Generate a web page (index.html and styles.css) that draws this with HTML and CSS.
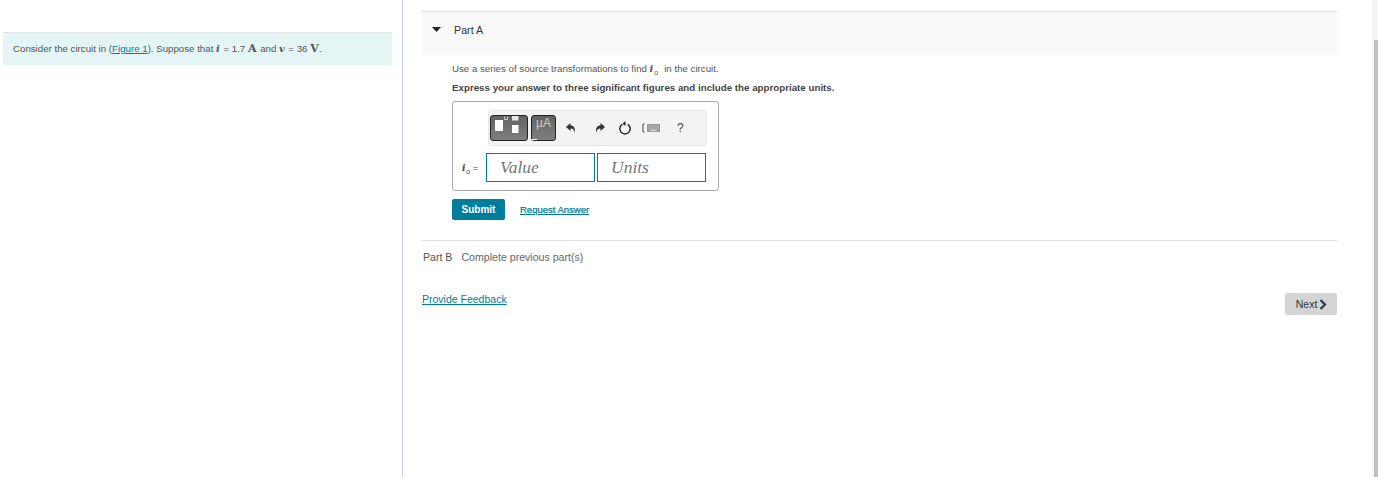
FILE: index.html
```html
<!DOCTYPE html>
<html lang="en">
<head>
<meta charset="utf-8">
<title>Part A</title>
<link rel="stylesheet" href="styles.css">
</head>
<body>
<div class="page">
  <aside class="left">
    <div class="intro">Consider the circuit in (<a href="#">Figure 1</a>). Suppose that <span class="mi">i</span> = 1.7 <span class="mu">A</span> and <span class="mi">v</span> = 36 <span class="mu">V</span>.</div>
  </aside>
  <main class="right">
    <header class="part-head">
      <svg class="caret" width="9" height="5" viewBox="0 0 9 5"><path d="M0 0h9L4.500 5z" fill="#222"/></svg>
      <span>Part A</span>
    </header>
    <section class="part-body">
      <p class="q">Use a series of source transformations to find <span class="mi">i</span><sub class="sub">o</sub><span class="after-sub">in the circuit.</span></p>
      <p class="inst">Express your answer to three significant figures and include the appropriate units.</p>
      <div class="answer">
        <div class="toolbar">
          <button class="tbtn tbtn-wide" type="button" aria-label="Templates">
            <svg width="36" height="24" viewBox="0 0 36 24"><rect x="4" y="4" width="8" height="11" fill="#fff"/><path d="M13.500 .5v3h3v-3" fill="none" stroke="#ddd" stroke-width=".9"/><rect x="21" y="0" width="6.500" height="4.500" fill="#e8e8e8"/><rect x="21" y="9" width="6.500" height="8" fill="#fff"/></svg>
          </button>
          <button class="tbtn tbtn-unit" type="button">µA</button>
          <svg class="tool tool-undo" width="12" height="12" viewBox="0 0 12 12"><path d="M5.500 1 1 5l4.500 4V6.500c2 0 3.500.8 4.200 4.500C10.500 6 9 3.500 5.500 3.500z" fill="#333"/></svg>
          <svg class="tool tool-redo" width="12" height="12" viewBox="0 0 12 12"><path d="M6.500 1 11 5 6.500 9V6.500c-2 0-3.500.8-4.200 4.500C1.500 6 3 3.500 6.500 3.500z" fill="#333"/></svg>
          <svg class="tool tool-reset" width="14" height="14" viewBox="0 0 14 14"><path d="M4.300 3.300a5.200 5.200 0 1 0 5.400 0" fill="none" stroke="#222" stroke-width="1.500"/><path d="M7.500 0v5L4.500 2.800z" fill="#222"/></svg>
          <svg class="tool tool-kbd" width="19" height="10" viewBox="0 0 19 10"><path d="M2.500 1H1v8h1.500" fill="none" stroke="#444"/><rect x="5" y="1" width="13" height="8" fill="#999"/><path d="M6 3h11M6 5h11" stroke="#ddd" stroke-width=".7" stroke-dasharray="1 .7"/><path d="M8 7.200h7" stroke="#eee"/></svg>
          <span class="help">?</span>
        </div>
        <div class="inputs">
          <label class="lhs"><span class="mi">i</span><sub class="sub">o</sub> =</label>
          <div class="field">Value</div>
          <div class="field">Units</div>
        </div>
      </div>
      <div class="actions">
        <button class="submit" type="button">Submit</button>
        <a class="req" href="#">Request Answer</a>
      </div>
    </section>
    <div class="part-b"><b>Part B</b><span>Complete previous part(s)</span></div>
    <div class="foot">
      <a class="feedback" href="#">Provide Feedback</a>
      <button class="next" type="button">Next<svg width="8" height="11" viewBox="0 0 8 11"><path d="M1.500 1 6 5.500 1.500 10" fill="none" stroke="#2d3a55" stroke-width="2.200"/></svg></button>
    </div>
  </main>
</div>
<div class="scrollbar"><div class="thumb"></div></div>
</body>
</html>
```

FILE: styles.css
```css
* { box-sizing: border-box; }
html, body { margin: 0; height: 100%; background: #fff; overflow: hidden; }
body { font-family: "Liberation Sans", Arial, sans-serif; color: #333; }
a { color: #007c9c; }
p { margin: 0; }
.page { display: flex; height: 477px; }
.left { width: 403px; flex: none; border-right: 1px solid #b9cfdc; padding: 32px 10px 0 3px; }
.intro { height: 33px; background: #e5f5f6; border-top: 1px solid #dde5e6; padding-left: 10px; font-size: 9.700px; line-height: 31px; color: #555; white-space: nowrap; }
.mi { font-family: "DejaVu Serif", serif; font-style: italic; font-weight: bold; margin-right: 1px; }
.mu { font-family: "DejaVu Serif", serif; font-weight: bold; font-size: 11px; margin: 0 1px 0 0; }
.sub { font-size: 7px; line-height: 0; }
.after-sub { margin-left: 6px; }
.right { width: 934px; flex: none; padding: 11px 0 0 19px; }
.part-head { height: 44px; background: #f9f9f9; border-top: 1px solid #e0e0e0; display: flex; align-items: center; gap: 13px; padding: 0 0 8px 10px; font-size: 10.700px; color: #333; }
.part-body { padding: 9px 0 0 30px; height: 186px; border-bottom: 1px solid #e0e0e0; }
.q { font-size: 9.700px; line-height: 10px; color: #555; }
.inst { font-size: 9.750px; font-weight: bold; line-height: 12px; margin-top: 8px; color: #444; }
.answer { width: 267px; height: 90px; margin-top: 7px; border: 1px solid #aaa; border-radius: 3px; padding: 8px 12px 0 0; }
.toolbar { margin-left: 35px; width: 219px; height: 36px; background: #f3f3f3; border: 1px solid #e6e6e6; border-radius: 4px; display: flex; align-items: center; padding: 0 0 0 1px; }
.tbtn { height: 26px; padding: 0; margin: 0; border: 1px solid #222; border-radius: 3px; background: linear-gradient(#636363, #7f7f7f); color: #ccc; display: flex; align-items: center; justify-content: center; }
.tbtn-wide { width: 38px; margin-right: 3px; }
.tbtn-unit { position: relative; width: 25px; font-family: "Liberation Sans", Arial, sans-serif; font-size: 12px; line-height: 13px; align-items: flex-start; padding-top: 1px; }
.tbtn-unit::after { content: ""; position: absolute; left: 0; bottom: 0; width: 5px; height: 1px; background: #fff; }
.tool { flex: none; }
.tool-undo { margin-left: 9px; }
.tool-redo { margin-left: 17px; }
.tool-reset { margin-left: 12px; }
.tool-kbd { margin-left: 10px; }
.help { margin-left: 16px; font-size: 12px; color: #444; }
.inputs { display: flex; align-items: center; gap: 2px; margin-top: 7px; height: 29px; }
.lhs { width: 31px; flex: none; text-align: right; padding-right: 6px; font-size: 9px; color: #444; white-space: nowrap; }
.field { width: 109px; height: 29px; border: 1px solid #007c9c; padding-left: 13px; font-family: "Liberation Serif", serif; font-style: italic; font-size: 17.500px; line-height: 26px; color: #777; }
.actions { display: flex; align-items: center; gap: 15px; margin-top: 8px; }
.submit { width: 53px; height: 21px; padding: 0 0 1px; border: 0; border-radius: 2px; background: #007c9c; color: #fff; font: bold 10px "Liberation Sans", Arial, sans-serif; }
.req { font-size: 9.500px; color: #007c9c; -webkit-text-stroke: .25px #007c9c; margin-top: -1px; }
.part-b { display: flex; gap: 9px; padding: 10px 0 0 1px; font-size: 10.600px; line-height: 12px; color: #666; }
.part-b b { font-weight: normal; color: #555; }
.foot { display: flex; justify-content: space-between; align-items: flex-start; margin-top: 30px; }
.feedback { font-size: 10.500px; line-height: 12px; color: #007c9c; }
.next { width: 52px; height: 22px; padding: 0 0 0 1px; border: 0; border-radius: 2px; background: #d4d4d4; color: #333; font: 10.500px "Liberation Sans", Arial, sans-serif; display: flex; align-items: center; justify-content: center; gap: 2px; }
.scrollbar { position: absolute; top: 0; right: 0; width: 6px; height: 477px; background: #f5f5f5; padding: 40px 0 0 2px; }
.thumb { height: 437px; background: #c1c1c1; }
```
